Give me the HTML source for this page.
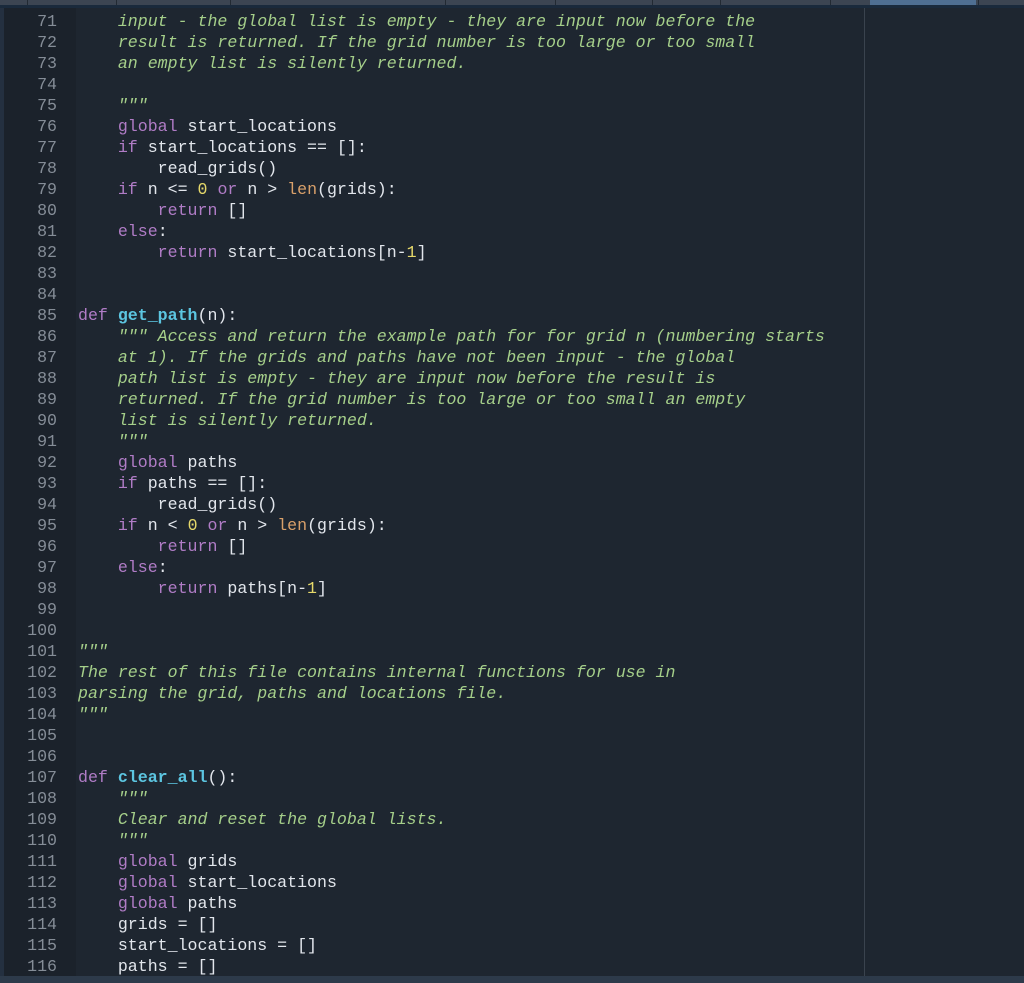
<!DOCTYPE html>
<html><head><meta charset="utf-8"><style>
html,body{margin:0;padding:0;width:1024px;height:983px;overflow:hidden;background:#1e2630;}
.top{position:absolute;left:0;top:0;width:1024px;height:5px;background:#3c4552;}
.top i{position:absolute;top:0;width:1px;height:5px;background:#222a33;}
.topsel{position:absolute;left:870px;top:0;width:106px;height:5px;background:#4f6f92;}
.border{position:absolute;left:0;top:5px;width:1024px;height:3px;background:#1a2a3c;}
.gut{position:absolute;left:4px;top:8px;width:72px;height:968px;background:#1b222b;}
.rule{position:absolute;left:864px;top:8px;width:1px;height:968px;background:#3a434e;}
.bot{position:absolute;left:0;top:976px;width:1024px;height:7px;background:#2d3a4a;}
.lft{position:absolute;left:0;top:8px;width:4px;height:968px;background:#243040;}
pre{position:absolute;margin:0;top:11px;font-family:"Liberation Mono",monospace;font-size:16.6px;line-height:21px;}
.ln{left:4px;width:53px;text-align:right;color:#858d97;}
.code{left:78px;color:#e2e6ec;}
.c{color:#a5cf8a;font-style:italic;}
.k{color:#b07cc6;}
.f{color:#5cc5e0;font-weight:bold;}
.n{color:#e6d96a;}
.b{color:#d9a06a;}
</style></head><body>
<div class="top"><i style="left:27px"></i><i style="left:116px"></i><i style="left:230px"></i><i style="left:445px"></i><i style="left:555px"></i><i style="left:652px"></i><i style="left:720px"></i><i style="left:830px"></i><i style="left:978px"></i></div>
<div class="topsel"></div>
<div class="border"></div>
<div class="lft"></div>
<div class="gut"></div>
<div class="rule"></div>
<pre class="ln">71
72
73
74
75
76
77
78
79
80
81
82
83
84
85
86
87
88
89
90
91
92
93
94
95
96
97
98
99
100
101
102
103
104
105
106
107
108
109
110
111
112
113
114
115
116</pre>
<pre class="code"><span class="c">    input - the global list is empty - they are input now before the
    result is returned. If the grid number is too large or too small
    an empty list is silently returned.

    """</span>
    <span class="k">global</span> start_locations
    <span class="k">if</span> start_locations == []:
        read_grids()
    <span class="k">if</span> n &lt;= <span class="n">0</span> <span class="k">or</span> n &gt; <span class="b">len</span>(grids):
        <span class="k">return</span> []
    <span class="k">else</span>:
        <span class="k">return</span> start_locations[n-<span class="n">1</span>]


<span class="k">def</span> <span class="f">get_path</span>(n):
<span class="c">    """ Access and return the example path for for grid n (numbering starts
    at 1). If the grids and paths have not been input - the global
    path list is empty - they are input now before the result is
    returned. If the grid number is too large or too small an empty
    list is silently returned.
    """</span>
    <span class="k">global</span> paths
    <span class="k">if</span> paths == []:
        read_grids()
    <span class="k">if</span> n &lt; <span class="n">0</span> <span class="k">or</span> n &gt; <span class="b">len</span>(grids):
        <span class="k">return</span> []
    <span class="k">else</span>:
        <span class="k">return</span> paths[n-<span class="n">1</span>]


<span class="c">"""
The rest of this file contains internal functions for use in
parsing the grid, paths and locations file.
"""</span>


<span class="k">def</span> <span class="f">clear_all</span>():
<span class="c">    """
    Clear and reset the global lists.
    """</span>
    <span class="k">global</span> grids
    <span class="k">global</span> start_locations
    <span class="k">global</span> paths
    grids = []
    start_locations = []
    paths = []</pre>
<div class="bot"></div>
</body></html>
